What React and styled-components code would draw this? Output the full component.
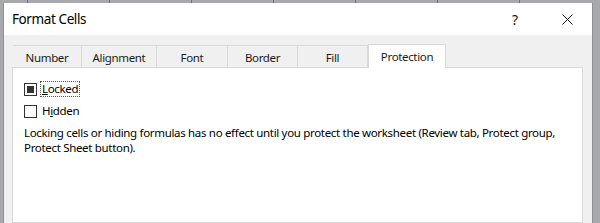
import React from 'react'
import styled, { createGlobalStyle } from 'styled-components'

const GlobalStyle = createGlobalStyle`
  html, body {
    margin: 0;
    padding: 0;
    overflow: hidden;
  }
  body {
    width: 600px;
    height: 223px;
    background-color: #a7a9ad;
    background-image:
      linear-gradient(to bottom, transparent 0 51px, #7d8087 51px 52px, transparent 52px 100%),
      linear-gradient(to right, transparent 0 27px, #6f7278 27px 28px, transparent 28px 100%);
    background-size: 100% 23px, 82px 100%;
    font-family: "Noto Sans", "Liberation Sans", sans-serif;
  }
`

const Dialog = styled.div`
  margin: 3px 0 0 3px;
  width: 588px;
  height: 220px;
  border-left: 1px solid #8d8f93;
  border-right: 1px solid #8d8f93;
  background: #f0f0f0;
  display: flex;
  flex-direction: column;
`

const TitleBar = styled.div`
  height: 32px;
  flex-shrink: 0;
  background: #fff;
  display: flex;
  align-items: center;
  gap: 6px;
  padding: 0 2px 0 8px;
`

const Title = styled.div`
  flex: 1;
  font-size: 13.5px;
  color: #000;
  letter-spacing: -0.4px;
`

const TitleButton = styled.div`
  width: 46px;
  height: 32px;
  display: flex;
  align-items: center;
  justify-content: center;
  font-size: 14px;
  color: #111;
`

const Body = styled.div`
  flex: 1;
  padding: 9px 9px 0 8px;
  display: flex;
  flex-direction: column;
`

const TabStrip = styled.div`
  display: flex;
  align-items: flex-end;
  height: 23px;
  padding-left: 1px;
`

const Tab = styled.div`
  width: ${props => props.w}px;
  box-sizing: border-box;
  height: ${props => (props.active ? 24 : 22)}px;
  margin-bottom: ${props => (props.active ? -1 : 0)}px;
  border-top: 1px solid #d9d9d9;
  border-right: 1px solid #d9d9d9;
  border-left: ${props => (props.active ? '1px solid #d9d9d9' : 'none')};
  background: ${props => (props.active ? '#fff' : '#f0f0f0')};
  display: flex;
  align-items: center;
  justify-content: center;
  font-size: 11.5px;
  color: #1a1a1a;
  letter-spacing: -0.35px;
  position: relative;
  z-index: ${props => (props.active ? 2 : 1)};
  padding-top: ${props => (props.active ? 0 : 1)}px;
`

const Panel = styled.div`
  flex: 1;
  background: #fff;
  border: 1px solid #d9d9d9;
  padding: 10px 10px 0 11px;
  display: flex;
  flex-direction: column;
`

const CheckRow = styled.div`
  display: flex;
  align-items: center;
  height: 22px;
  gap: 3px;
`

const Box = styled.div`
  width: 13px;
  height: 13px;
  box-sizing: border-box;
  border: 1px solid #333;
  display: flex;
  align-items: center;
  justify-content: center;
  background: #fff;
`

const Fill = styled.div`
  width: 7px;
  height: 7px;
  background: #333;
`

const Label = styled.span`
  font-size: 11.5px;
  color: #000;
  padding: 0 1px;
  line-height: 14px;
  border: 1px ${props => (props.focus ? 'dotted #555' : 'solid transparent')};
  letter-spacing: -0.35px;
`

const Note = styled.p`
  margin: 3px 0 0 0;
  font-size: 11.5px;
  line-height: 15px;
  color: #000;
  letter-spacing: -0.32px;
`

const tabs = [
  { label: 'Number', w: 69 },
  { label: 'Alignment', w: 75 },
  { label: 'Font', w: 71 },
  { label: 'Border', w: 70 },
  { label: 'Fill', w: 70 },
  { label: 'Protection', w: 78, active: true },
]

const App = () => {
  return (
    <>
      <GlobalStyle />
      <Dialog>
        <TitleBar>
          <Title>Format Cells</Title>
          <TitleButton>?</TitleButton>
          <TitleButton>
            <svg width="11" height="11" viewBox="0 0 11 11">
              <path d="M0.5 0.5 L10.5 10.5 M10.5 0.5 L0.5 10.5" stroke="#111" strokeWidth="1" />
            </svg>
          </TitleButton>
        </TitleBar>
        <Body>
          <TabStrip>
            {tabs.map(t => (
              <Tab key={t.label} w={t.w} active={t.active}>{t.label}</Tab>
            ))}
          </TabStrip>
          <Panel>
            <CheckRow>
              <Box><Fill /></Box>
              <Label focus><u>L</u>ocked</Label>
            </CheckRow>
            <CheckRow>
              <Box />
              <Label>H<u>i</u>dden</Label>
            </CheckRow>
            <Note>
              Locking cells or hiding formulas has no effect until you protect the worksheet (Review tab, Protect group, Protect Sheet button).
            </Note>
          </Panel>
        </Body>
      </Dialog>
    </>
  )
}

export default App
